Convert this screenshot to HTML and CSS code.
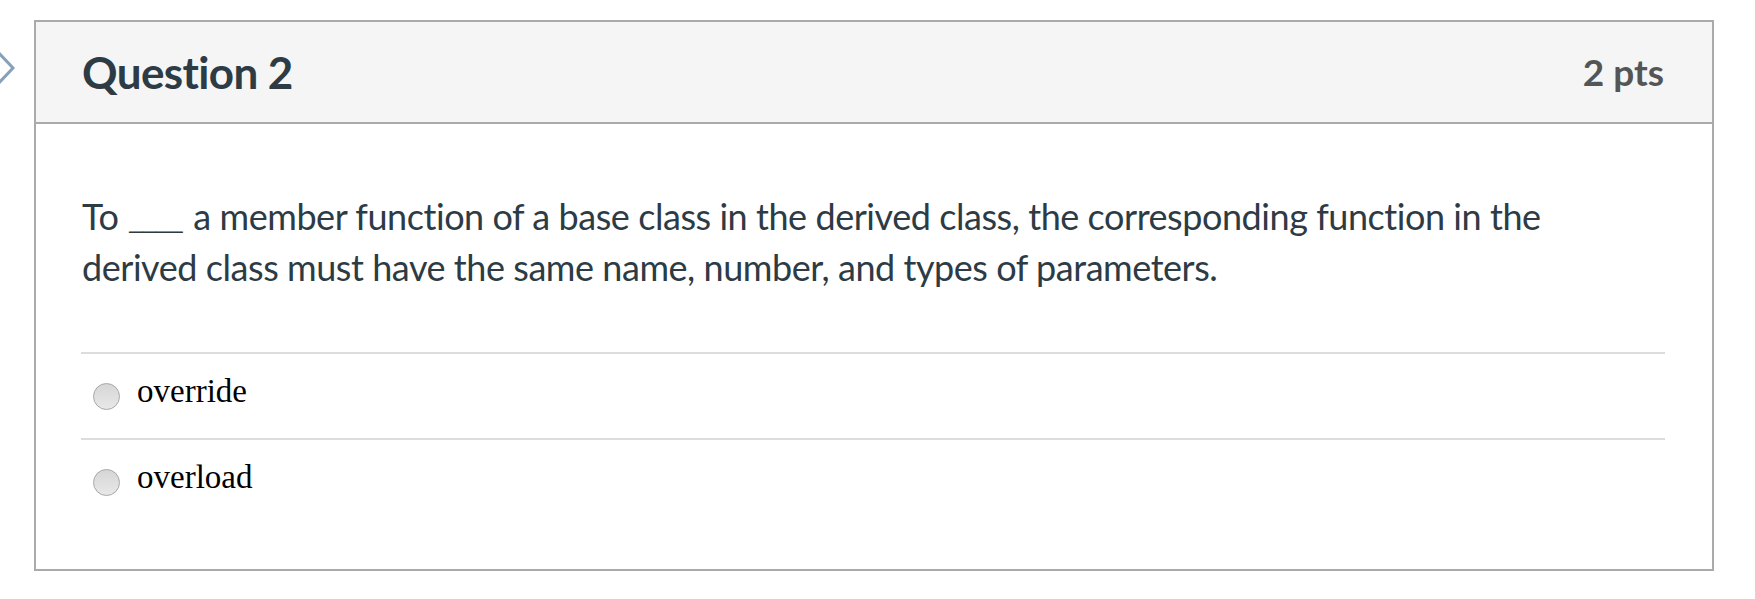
FILE: index.html
```html
<!DOCTYPE html>
<html lang="en">
<head>
<meta charset="utf-8">
<title>Question 2</title>
<link rel="stylesheet" href="styles.css">
</head>
<body>
<div class="page">
  <div class="side">
    <svg class="chevron" width="20" height="44" viewBox="0 0 20 44">
      <polyline points="-5,1 13,20 -5,39" fill="none" stroke="#86a1b9" stroke-width="3" stroke-linejoin="miter"/>
    </svg>
  </div>
  <div class="question">
    <div class="q-header">
      <h2 class="q-title">Question 2</h2>
      <div class="q-points">2 pts</div>
    </div>
    <div class="q-body">
      <p class="q-text">To <span class="blank">____</span> a member function of a base class in the derived class, the corresponding function in the<br>derived class must have the same name, number, and types of parameters.</p>
      <div class="answers">
        <label class="answer">
          <span class="radio"></span>
          <span class="answer-label">override</span>
        </label>
        <label class="answer">
          <span class="radio"></span>
          <span class="answer-label">overload</span>
        </label>
      </div>
    </div>
  </div>
</div>
</body>
</html>
```

FILE: styles.css
```css
html, body {
  margin: 0;
  padding: 0;
  background: #ffffff;
}

.page {
  display: flex;
  align-items: flex-start;
  padding-top: 20px;
}

.side {
  width: 34px;
  flex: 0 0 34px;
}

.chevron {
  display: block;
  margin-top: 28px;
}

.question {
  width: 1680px;
  box-sizing: border-box;
  border: 2px solid #aaaaaa;
  font-family: Lato, "Noto Sans", sans-serif;
  font-variant-ligatures: none;
  color: #2d3b45;
}

.q-header {
  height: 100px;
  background: #f5f5f5;
  border-bottom: 2px solid #aaaaaa;
  display: flex;
  align-items: center;
  justify-content: space-between;
  padding: 0 48px 0 46px;
}

.q-title {
  margin: 0;
  font-size: 44px;
  font-weight: 700;
  line-height: 1.2;
  letter-spacing: -0.6px;
  color: #2d3b45;
}

.q-points {
  font-size: 37px;
  font-weight: 700;
  line-height: 1.2;
  color: #555555;
}

.q-body {
  padding: 67px 47px 45px 45px;
}

.q-text {
  margin: 0;
  font-size: 36px;
  line-height: 51px;
  letter-spacing: -0.45px;
  padding-left: 1px;
}

.blank {
  font-family: "Liberation Sans", Arial, sans-serif;
  font-size: 24px;
  line-height: 1;
  letter-spacing: 0;
  vertical-align: 2px;
  padding: 0 2px;
}

.answers {
  margin-top: 59px;
}

.answer {
  display: flex;
  align-items: center;
  height: 84px;
  border-top: 2px solid #dddddd;
}

.radio {
  display: block;
  width: 25px;
  height: 25px;
  border: 1px solid #a6a6a6;
  border-radius: 50%;
  background: linear-gradient(#d6d6d6, #e8e8e8);
  margin-left: 12px;
  margin-right: 17px;
  flex: 0 0 auto;
}

.answer-label {
  font-family: "Liberation Serif", "Times New Roman", serif;
  font-size: 33px;
  color: #000000;
  line-height: 1.15;
  padding-bottom: 8px;
}
```
